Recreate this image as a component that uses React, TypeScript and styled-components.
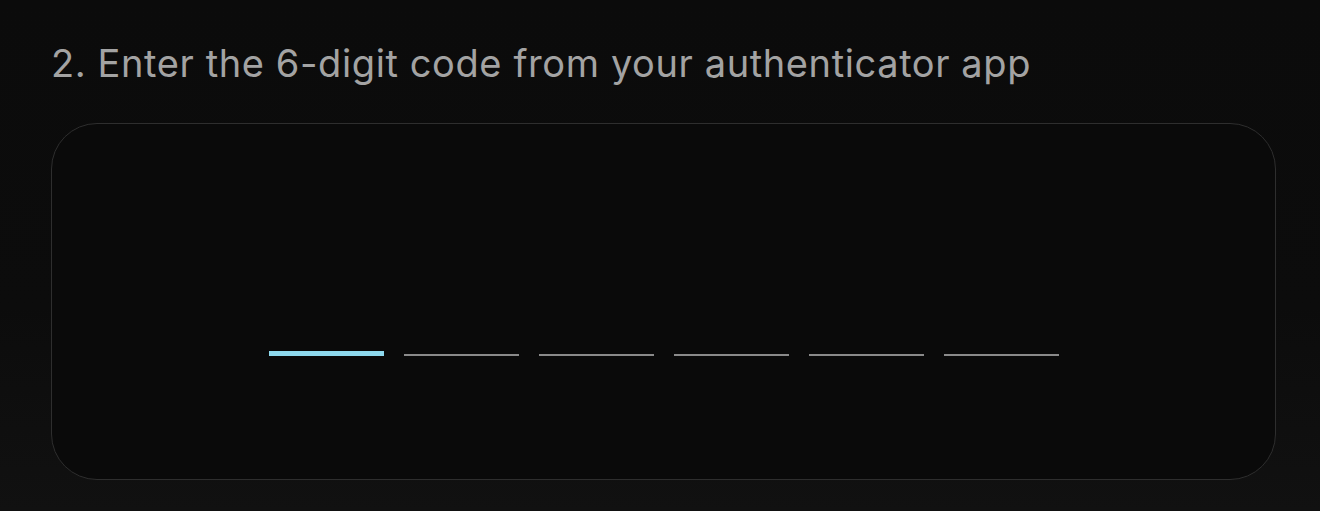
import React from 'react';
import styled, { createGlobalStyle, css } from 'styled-components';

const GlobalStyle = createGlobalStyle`
  html, body {
    margin: 0;
    padding: 0;
    background: linear-gradient(180deg, #0b0b0b 0%, #0c0c0c 60%, #111111 100%);
    min-height: 100%;
  }
  body {
    font-family: Inter, "Noto Sans", "Liberation Sans", sans-serif;
    -webkit-font-smoothing: antialiased;
  }
`;

const Page = styled.div`
  box-sizing: border-box;
  height: 511px;
  padding: 39px 44px 31px 51px;
  display: flex;
  flex-direction: column;
`;

const StepLabel = styled.div`
  font-size: 38px;
  line-height: 48px;
  color: #a3a3a3;
  letter-spacing: 0.6px;
  margin-bottom: 36px;
`;

const CodePanel = styled.div`
  box-sizing: border-box;
  height: 357px;
  border: 1.5px solid #2e2e2e;
  border-radius: 46px;
  background: #0a0a0a;
  display: flex;
  align-items: center;
  justify-content: center;
`;

const Slots = styled.div`
  display: flex;
  gap: 20px;
`;

interface SlotProps {
  active?: boolean;
}

const Slot = styled.div<SlotProps>`
  box-sizing: border-box;
  width: 115px;
  height: 108px;
  ${({ active }) =>
    active
      ? css`
          border-bottom: 5px solid #8ed9ee;
        `
      : css`
          border-bottom: 2.5px solid #8a8a8a;
        `}
`;

export default function App() {
  const digits = [0, 1, 2, 3, 4, 5];
  return (
    <>
      <GlobalStyle />
      <Page>
        <StepLabel>2. Enter the 6-digit code from your authenticator app</StepLabel>
        <CodePanel>
          <Slots>
            {digits.map((d) => (
              <Slot key={d} active={d === 0} />
            ))}
          </Slots>
        </CodePanel>
      </Page>
    </>
  );
}
